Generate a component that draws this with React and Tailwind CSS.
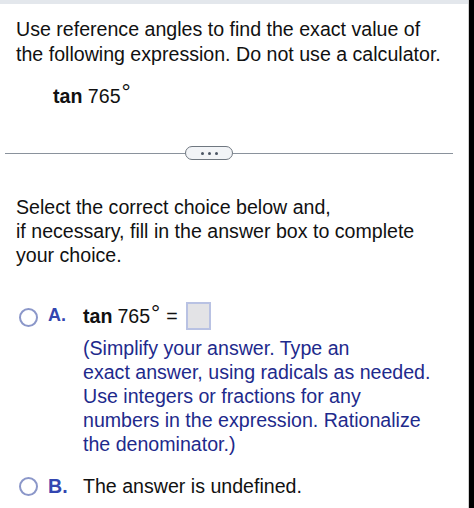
const font = { fontFamily: '"Liberation Sans", Arial, sans-serif' };

const Radio = () => (
  <span className="inline-block h-[19px] w-[19px] shrink-0 rounded-full border-2 border-[#8b97c9] bg-white" />
);

const Deg = () => (
  <span className="relative top-[-3px] ml-[1px] text-[23px] leading-[0]">°</span>
);

export default function App() {
  return (
    <div className="flex h-[508px] w-[474px] overflow-hidden bg-black" style={font}>
      <div className="flex w-[469px] flex-col border-r border-[#d0d0d0] bg-white">
        <div className="h-[4px] bg-[#e3e7ec]" />
        <div className="px-4 pt-[13px] text-[19.6px] leading-[25px] text-[#111]">
          <p>
            Use reference angles to find the exact value of
            <br />
            the following expression. Do not use a calculator.
          </p>
          <p className="mt-[17px] pl-[37px]">
            <span className="font-bold">tan</span> 765<Deg />
          </p>
        </div>

        <div className="mt-[37px] flex items-center pl-[5px]">
          <div className="h-px w-[180px] bg-[#8a929c]" />
          <div className="flex h-[14px] w-[48px] items-center justify-center gap-[4px] rounded-full border border-[#6f7780] bg-[#f2f4f7]">
            <span className="h-[3px] w-[3px] rounded-full bg-[#4b5563]" />
            <span className="h-[3px] w-[3px] rounded-full bg-[#4b5563]" />
            <span className="h-[3px] w-[3px] rounded-full bg-[#4b5563]" />
          </div>
          <div className="h-px w-[220px] bg-[#8a929c]" />
        </div>

        <div className="px-4 pt-[35px] text-[19.6px] leading-[24px] text-[#111]">
          <p>
            Select the correct choice below and,
            <br />
            if necessary, fill in the answer box to complete
            <br />
            your choice.
          </p>
        </div>

        <div className="mt-[35px] flex items-start pl-[19px] pr-4">
          <div className="flex items-center gap-[10px] pt-[2px]">
            <Radio />
            <span className="relative top-[-2px] w-[26px] text-[18px] font-bold text-[#3346b0]">A.</span>
          </div>
          <div className="ml-[9px] text-[19.6px] leading-[24px]">
            <div className="flex items-center text-[#111]">
              <span className="font-bold">tan</span>
              <span className="ml-[5px]">765</span>
              <Deg />
              <span className="ml-[6px]">=</span>
              <span className="ml-[8px] inline-block h-[28px] w-[25px] border-2 border-[#b9c2e3] bg-[#e3e3e6]" />
            </div>
            <p className="mt-[6px] text-[#1e2a8c]">
              (Simplify your answer. Type an
              <br />
              exact answer, using radicals as needed.
              <br />
              Use integers or fractions for any
              <br />
              numbers in the expression. Rationalize
              <br />
              the denominator.)
            </p>
          </div>
        </div>

        <div className="mt-[16px] flex items-center pl-[19px]">
          <div className="flex items-center gap-[10px]">
            <Radio />
            <span className="w-[26px] text-[19.6px] font-bold text-[#3346b0]">B.</span>
          </div>
          <span className="ml-[9px] text-[19.6px] text-[#111]">The answer is undefined.</span>
        </div>
      </div>
    </div>
  );
}
